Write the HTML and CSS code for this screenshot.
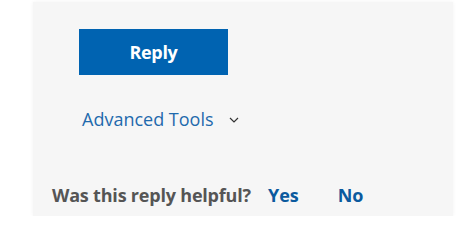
FILE: index.html
```html
<!DOCTYPE html>
<html>
<head>
<meta charset="utf-8">
<link rel="stylesheet" href="styles.css">
</head>
<body>
<div class="panel">
  <div class="actions">
    <button class="reply-btn">Reply</button>
    <div class="advanced">
      <span class="advanced-label">Advanced Tools</span>
      <svg class="chevron" width="10" height="6" viewBox="0 0 10 6"><path d="M1 1 L5 5 L9 1" fill="none" stroke="#333" stroke-width="1.2"/></svg>
    </div>
  </div>
  <div class="feedback">
    <span class="question">Was this reply helpful?</span>
    <a class="vote">Yes</a>
    <a class="vote">No</a>
  </div>
</div>
</body>
</html>
```
FILE: styles.css
```css
html, body {
  margin: 0;
  padding: 0;
  background: #ffffff;
}
body {
  font-family: "Open Sans", "Noto Sans", sans-serif;
}
.panel {
  margin: 2px 0 0 33px;
  width: 420px;
  height: 214px;
  background: #f6f6f6;
  box-shadow: 0 0 4px rgba(0,0,0,0.05);
  display: flex;
  flex-direction: column;
}
.actions {
  padding: 27px 0 0 46px;
  display: flex;
  flex-direction: column;
  align-items: flex-start;
}
.reply-btn {
  width: 149px;
  height: 46px;
  border: 0;
  background: #0063b1;
  color: #ffffff;
  font-family: inherit;
  font-size: 18px;
  font-weight: 700;
  letter-spacing: -0.3px;
  padding: 0;
}
.advanced {
  margin: 32px 0 0 3px;
  display: flex;
  align-items: center;
  gap: 15px;
  height: 24px;
}
.advanced-label {
  color: #1f6aad;
  font-size: 18px;
}
.chevron {
  margin-top: 2px;
}
.feedback {
  margin: auto 0 0 19px;
  padding-bottom: 9px;
  display: flex;
  align-items: baseline;
  font-weight: 700;
  font-size: 18px;
}
.question {
  color: #555555;
  letter-spacing: -0.2px;
}
.vote {
  color: #0b5a9e;
  margin-left: 17px;
}
.vote + .vote {
  margin-left: 39px;
}
```
